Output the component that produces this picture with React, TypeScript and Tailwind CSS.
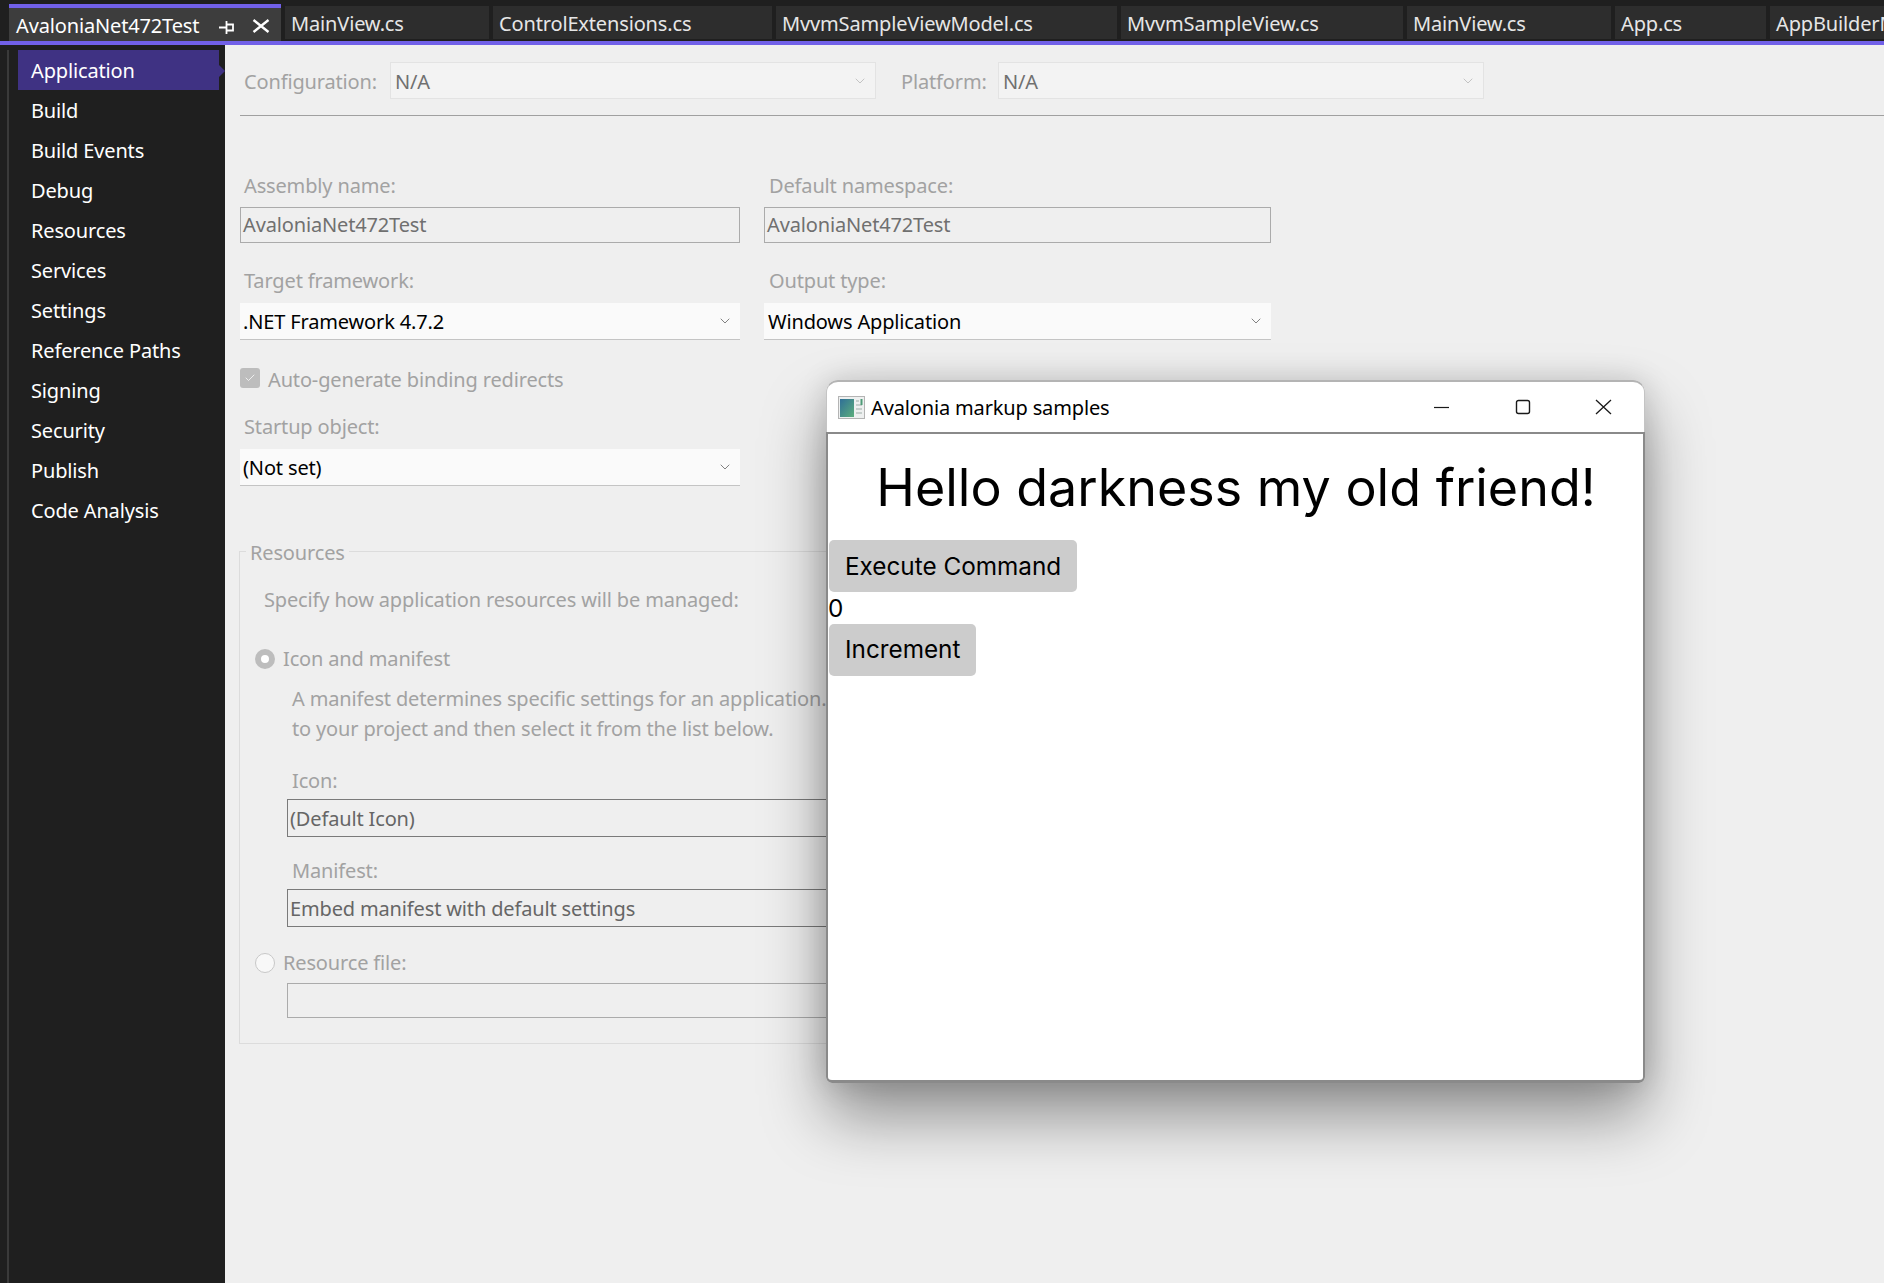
import { ChevronDown, Check } from "lucide-react"

const tabs = [
  { label: "MainView.cs", width: "w-[204px]" },
  { label: "ControlExtensions.cs", width: "w-[279px]" },
  { label: "MvvmSampleViewModel.cs", width: "w-[341px]" },
  { label: "MvvmSampleView.cs", width: "w-[282px]" },
  { label: "MainView.cs", width: "w-[204px]" },
  { label: "App.cs", width: "w-[151px]" },
  { label: "AppBuilderMixins.cs", width: "w-[300px]" },
]

const navItems = [
  "Application",
  "Build",
  "Build Events",
  "Debug",
  "Resources",
  "Services",
  "Settings",
  "Reference Paths",
  "Signing",
  "Security",
  "Publish",
  "Code Analysis",
]

function TabBar() {
  return (
    <div className="flex h-[45px] shrink-0 border-b-4 border-[#7160e8] bg-[#1f1f1f] pl-[9px]">
      <div className="mt-[4px] flex h-[37px] w-[272px] shrink-0 items-center border-t-4 border-[#7160e8] bg-[#3d3d3d] pl-[7px] text-white">
        <span className="w-[203px] shrink-0 whitespace-nowrap pt-[2px]">AvaloniaNet472Test</span>
        <svg width="16" height="13" viewBox="0 0 16 13" className="mt-[5px] shrink-0">
          <path d="M0 6.5h7M7.5 3.5h6.5v6H7.5zM7.5 0v13" fill="none" stroke="#fff" strokeWidth="1.8" />
        </svg>
        <svg width="18" height="14" viewBox="0 0 18 14" className="ml-[17px] mt-[3px] shrink-0">
          <path d="M1.5 1l15 12M16.5 1l-15 12" fill="none" stroke="#fff" strokeWidth="2.4" />
        </svg>
      </div>
      {tabs.map((tab, i) => (
        <div
          key={i}
          className={`${tab.width} ml-[4px] mt-[6px] flex h-[33px] shrink-0 items-center overflow-hidden whitespace-nowrap bg-[#2d2d2d] pl-[6px] pt-[2px] text-[#e6e6e6]`}
        >
          {tab.label}
        </div>
      ))}
    </div>
  )
}

function Sidebar() {
  return (
    <aside className="w-[225px] shrink-0 bg-[#1f1f1f] pt-[5px]">
      <div className="ml-[7px] h-full border-l-2 border-[#3a3a3a] pl-[9px]">
        {navItems.map((item, i) => (
          <div
            key={item}
            className={`relative flex h-[40px] w-[201px] items-center pl-[13px] pt-[2px] text-white ${i === 0 ? "bg-[#3f3283]" : ""}`}
          >
            {item}
            {i === 0 && (
              <span className="absolute left-full top-[15px] border-y-[6px] border-l-[6px] border-y-transparent border-l-[#3f3283]" />
            )}
          </div>
        ))}
      </div>
    </aside>
  )
}

function Combo({ value, disabled, className }: { value: string; disabled?: boolean; className: string }) {
  return (
    <div
      className={`flex h-[37px] shrink-0 items-center justify-between pl-[3px] pr-[7px] ${
        disabled
          ? "border border-[#e3e3e3] bg-[#f3f3f3] pl-[4px] text-[#707070]"
          : "border-b border-[#c4c4c4] bg-[#fafafa] text-black"
      } ${className}`}
    >
      <span className="pt-[2px]">{value}</span>
      <ChevronDown size={16} strokeWidth={1} className={disabled ? "text-[#ababab]" : "text-[#444444]"} />
    </div>
  )
}

function Label({ children, className = "" }: { children: React.ReactNode; className?: string }) {
  return <div className={`h-[30px] whitespace-nowrap leading-[30px] text-[#a2a2a2] ${className}`}>{children}</div>
}

function TextInput({ value }: { value: string }) {
  return (
    <div className="flex h-[36px] items-center border border-[#ababab] pl-[2px] text-[#707070]">{value}</div>
  )
}

function FormPage() {
  return (
    <main className="min-w-0 flex-1 bg-[#efefef] pl-[14px] pt-[17px]">
      <div className="flex h-[37px] items-center">
        <span className="ml-[5px] w-[146px] pt-[2px] text-[#a2a2a2]">Configuration:</span>
        <Combo value="N/A" disabled className="w-[486px]" />
        <span className="ml-[25px] w-[97px] pt-[2px] text-[#a2a2a2]">Platform:</span>
        <Combo value="N/A" disabled className="w-[486px]" />
      </div>
      <div className="ml-px mt-[16px] border-t border-[#a0a0a0]" />

      <div className="ml-px mt-[55px] flex gap-[24px]">
        <div className="w-[500px]">
          <Label className="mb-[6px] pl-[4px]">Assembly name:</Label>
          <TextInput value="AvaloniaNet472Test" />
          <Label className="mb-[7px] mt-[23px] pl-[4px]">Target framework:</Label>
          <Combo value=".NET Framework 4.7.2" className="w-full" />
        </div>
        <div className="w-[507px]">
          <Label className="mb-[6px] pl-[5px]">Default namespace:</Label>
          <TextInput value="AvaloniaNet472Test" />
          <Label className="mb-[7px] mt-[23px] pl-[5px]">Output type:</Label>
          <Combo value="Windows Application" className="w-full pl-[4px]" />
        </div>
      </div>

      <div className="ml-px mt-[28px] flex h-[20px] items-center">
        <span className="flex h-[20px] w-[20px] items-center justify-center rounded-[3px] bg-[#bdbdbd]">
          <Check size={12} strokeWidth={1.5} className="text-white" />
        </span>
        <span className="ml-[8px] mt-[3px] text-[#a2a2a2]">Auto-generate binding redirects</span>
      </div>

      <Label className="mb-[7px] ml-px mt-[24px] pl-[4px]">Startup object:</Label>
      <Combo value="(Not set)" className="ml-px w-[500px]" />

      <section className="relative mt-[65px] h-[493px] w-[1000px] border border-[#dcdcdc] pl-[24px] pt-[33px]">
        <span className="absolute left-[6px] top-[-14px] h-[30px] bg-[#efefef] px-[4px] leading-[30px] text-[#a2a2a2]">
          Resources
        </span>
        <Label>Specify how application resources will be managed:</Label>

        <div className="ml-[-9px] mt-[29px] flex h-[30px] items-center">
          <span className="h-[20px] w-[20px] rounded-full border-[6px] border-[#bdbdbd] bg-white" />
          <span className="ml-[8px] text-[#a2a2a2]">Icon and manifest</span>
        </div>

        <div className="ml-[28px] mt-[10px] whitespace-nowrap leading-[30px] text-[#a2a2a2]">
          <div>A manifest determines specific settings for an application. To embed a custom manifest, first add it</div>
          <div>to your project and then select it from the list below.</div>
        </div>

        <Label className="mb-[3px] ml-[28px] mt-[22px]">Icon:</Label>
        <div className="ml-[23px] flex h-[38px] items-center border border-[#7a7a7a] pl-[2px] pt-[2px] text-[#666666]">
          (Default Icon)
        </div>
        <Label className="mb-[3px] ml-[28px] mt-[19px]">Manifest:</Label>
        <div className="ml-[23px] flex h-[38px] items-center border border-[#7a7a7a] pl-[2px] pt-[2px] text-[#666666]">
          Embed manifest with default settings
        </div>

        <div className="ml-[-9px] mt-[21px] flex h-[30px] items-center">
          <span className="h-[20px] w-[20px] rounded-full border border-[#c8c8c8] bg-[#f8f8f8]" />
          <span className="ml-[8px] text-[#a2a2a2]">Resource file:</span>
        </div>
        <div className="ml-[23px] mt-[5px] h-[35px] border border-[#ababab]" />
      </section>
    </main>
  )
}

function WindowIcon() {
  return (
    <svg width="27" height="23" viewBox="0 0 27 23" className="shrink-0">
      <defs>
        <linearGradient id="pane" x1="0" y1="0" x2="1" y2="1">
          <stop offset="0" stopColor="#2f6f97" />
          <stop offset="1" stopColor="#5cae7c" />
        </linearGradient>
      </defs>
      <rect x="0.5" y="0.5" width="26" height="22" fill="#eef0f0" stroke="#b4b4b4" />
      <rect x="2" y="3" width="14" height="18" fill="url(#pane)" />
      <path d="M18 5h3M18 9h6M18 13h6M18 17h6" stroke="#b9c4c0" strokeWidth="1.5" />
      <path d="M23.5 3v6" stroke="#4e9c78" strokeWidth="2" />
    </svg>
  )
}

function AvaloniaWindow() {
  return (
    <div className="absolute left-[826px] top-[380px] flex h-[703px] w-[819px] flex-col rounded-b-[6px] rounded-t-[12px] bg-white font-['Inter',sans-serif] tracking-normal shadow-[0_34px_64px_rgba(0,0,0,0.4),0_0_30px_rgba(0,0,0,0.14)]">
      <div className="flex h-[52px] shrink-0 items-center rounded-t-[12px] border-x border-t-2 border-x-[#c4c4c4] border-t-[#b4b4b4] pl-[11px] font-['Noto_Sans',sans-serif] tracking-[-0.15px] text-black">
        <WindowIcon />
        <span className="ml-[6px] pt-[2px]">Avalonia markup samples</span>
        <svg width="200" height="16" viewBox="0 0 200 16" className="ml-auto mr-[32px] shrink-0">
          <path d="M22 8.5h15" stroke="#1a1a1a" strokeWidth="1.2" />
          <rect x="104.5" y="1.5" width="13" height="13" rx="2" fill="none" stroke="#1a1a1a" strokeWidth="1.4" />
          <path d="M184 1l15 14M199 1l-15 14" stroke="#1a1a1a" strokeWidth="1.3" />
        </svg>
      </div>
      <div className="flex min-h-0 flex-1 flex-col items-start rounded-b-[6px] border-x-2 border-b-[3px] border-t-2 border-[#8a8a8a] pl-px text-black">
        <h1 className="mt-[23px] h-[61px] w-full text-center text-[52px] font-normal leading-[61px]">
          Hello darkness my old friend!
        </h1>
        <button className="mt-[22px] h-[52px] rounded-[5px] bg-[#cccccc] px-[16px] text-[24.3px] leading-[30px]">
          Execute Command
        </button>
        <div className="ml-[-1px] h-[32px] pt-[1px] text-[24.3px] leading-[30px]">0</div>
        <button className="h-[52px] rounded-[5px] bg-[#cccccc] px-[16px] pb-[2px] text-[24.3px] leading-[30px]">
          Increment
        </button>
      </div>
    </div>
  )
}

export default function App() {
  return (
    <div className="relative flex h-[1283px] w-[1884px] flex-col overflow-hidden bg-[#1f1f1f] font-['Noto_Sans',sans-serif] text-[20px] tracking-[-0.15px]">
      <TabBar />
      <div className="flex min-h-0 flex-1">
        <Sidebar />
        <FormPage />
      </div>
      <AvaloniaWindow />
    </div>
  )
}
